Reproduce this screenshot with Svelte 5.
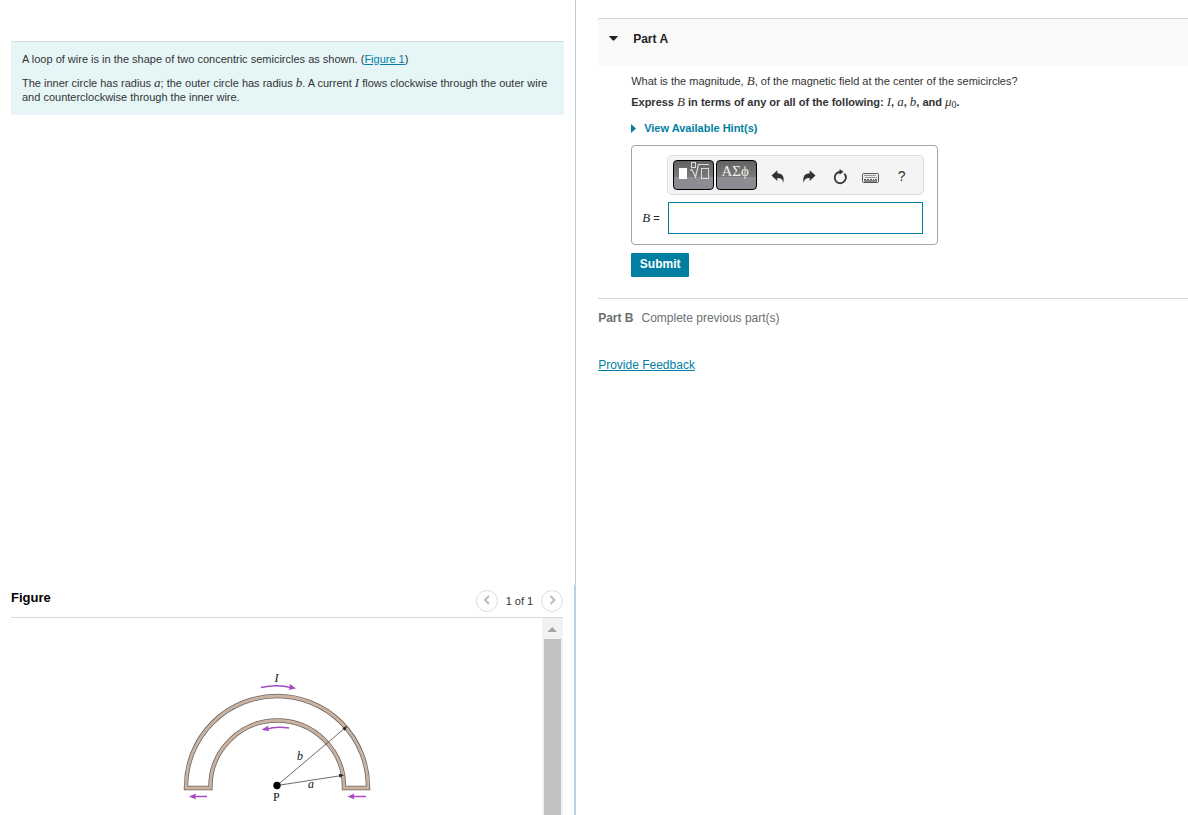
<script>
  let answer = $state('');
</script>

<div class="page">
  <section class="left">
    <div class="problem">
      <div class="intro">
        <p>A loop of wire is in the shape of two concentric semicircles as shown. (<a href="#figure">Figure 1</a>)</p>
        <p>The inner circle has radius <i>a</i>; the outer circle has radius <i>b</i>. A current <i>I</i> flows clockwise through the outer wire and counterclockwise through the inner wire.</p>
      </div>
    </div>

    <div class="figure-pane" id="figure">
      <header class="figure-head">
        <h2>Figure</h2>
        <nav class="pager" aria-label="Figures">
          <button aria-label="Previous figure"><svg width="20" height="20" viewBox="0 0 20 20"><path d="M12 5 8 9l4 4" /></svg></button>
          <span>1 of 1</span>
          <button aria-label="Next figure"><svg width="20" height="20" viewBox="0 0 20 20"><path d="M8.500 5l4 4-4 4" /></svg></button>
        </nav>
      </header>
      <div class="viewer">
        <div class="drawing">
          <svg width="201" height="149" viewBox="176 666 201 149" role="img" aria-label="Two concentric semicircular wires around point P">
            <defs>
              <path id="wire" d="M186 788V787A91 91 0 0 1 368 787V788H344V787A66.8 66.5 0 0 0 210.4 787V788Z" />
            </defs>
            <use href="#wire" fill="none" stroke="#6b6561" stroke-width="4.4" />
            <use href="#wire" fill="none" stroke="#cbb3a2" stroke-width="2.8" />
            <g stroke="#444" stroke-width="0.8">
              <path d="M277 785.5 345 728M277 785.5 342 775.5" />
            </g>
            <path d="M347 726l-2 5-2.600-3zM344 775l-4.500 2.700-.6-4z" fill="#222" />
            <circle cx="277" cy="785.500" r="3.700" fill="#000" />
            <g fill="none" stroke="#a64bc4" stroke-width="1.500">
              <path d="M261 687.500q16-3.500 30 0M289 728q-13-2-22 1M207 796.500h-13M366 796.500h-13" />
            </g>
            <g fill="#a64bc4">
              <path d="M296 688.500l-7.500 1.500 1.500-2.800-.3-3.400z" />
              <path d="M261.500 729.800l7-4.200-.6 3 1.600 2.600z" />
              <path d="M189 796.500l7-3-1 3 1 3z" />
              <path d="M347.500 796.500l7-3-1 3 1 3z" />
            </g>
            <g class="labels">
              <text x="274.500" y="682" font-style="italic">I</text>
              <text x="297" y="760" font-style="italic">b</text>
              <text x="308" y="788" font-style="italic">a</text>
              <text x="273" y="801">P</text>
            </g>
          </svg>
        </div>
        <div class="scrollbar" aria-hidden="true">
          <svg width="21" height="21" viewBox="0 0 21 21"><path d="M5.500 14h9.500L10.200 9z" fill="#a3a3a3" /></svg>
          <div class="thumb"></div>
        </div>
      </div>
    </div>
  </section>

  <main class="right">
    <header class="part-head">
      <svg width="9" height="5" viewBox="0 0 9 5"><path d="M0 0h9L5.500 4.200q-1 .8-2 0z" fill="#222" /></svg>
      <h2>Part A</h2>
    </header>

    <div class="part-body">
      <p>What is the magnitude, <i>B</i>, of the magnetic field at the center of the semicircles?</p>
      <p class="express">Express <i>B</i> in terms of any or all of the following: <i>I</i>, <i>a</i>, <i>b</i>, and <i>μ</i><sub>0</sub>.</p>
      <a class="hints" href="#hints"><svg width="5" height="9" viewBox="0 0 5 9"><path d="M0 0l5 4.500L0 9z" fill="#007fa3" /></svg>View Available Hint(s)</a>

      <div class="answer">
        <div class="toolbar">
          <button class="dark" aria-label="Templates">
            <svg width="30" height="20" viewBox="0 0 30 20">
              <rect x="0" y="7" width="8" height="11" fill="#fff" />
              <g fill="none" stroke="#dcdcdc">
                <rect x="12.500" y="1.500" width="4" height="5" />
                <path d="M11 9.500l2-1 3.500 7.500L19.500 3.500H30" stroke-width="1.200" />
                <rect x="22.500" y="7.500" width="7" height="10" />
              </g>
            </svg>
          </button>
          <button class="dark greek" aria-label="Greek symbols">ΑΣϕ</button>
          <div class="tools">
            <button class="tool" aria-label="Undo">
              <svg width="16" height="16" viewBox="0 0 16 16"><path d="M1.500 6.500 7.300 1.300v3c5.200.2 7.500 3.600 5.900 9.500-.5-3.500-2.300-4.800-5.900-4.700v3z" fill="#333" /></svg>
            </button>
            <button class="tool" aria-label="Redo">
              <svg width="16" height="16" viewBox="0 0 16 16"><path d="M14.500 6.500 8.700 1.300v3C3.500 4.500 1.200 7.900 2.800 13.800c.5-3.500 2.300-4.800 5.900-4.700v3z" fill="#333" /></svg>
            </button>
            <button class="tool" aria-label="Reset">
              <svg width="16" height="16" viewBox="0 0 16 16"><path d="M12.300 4.700A5.600 5.600 0 1 1 8.500 3" fill="none" stroke="#333" stroke-width="1.800" /><path d="M7.500 0l4 2.800-4 3z" fill="#333" /></svg>
            </button>
            <button class="tool" aria-label="Keyboard shortcuts">
              <svg width="17" height="16" viewBox="0 0 17 16"><rect x=".5" y="4.500" width="16" height="9" rx="1" fill="#eee" stroke="#555" /><path d="M2.500 6.500h12M3.500 8.500h11" stroke="#444" stroke-dasharray="1 1" /><path d="M2 10.500h2M13 10.500h2" stroke="#555" /><path d="M2 12h13" stroke="#888" stroke-width="2" /><path d="M5 10.500h7" stroke="#555" stroke-dasharray="2 1" /></svg>
            </button>
            <button class="tool help" aria-label="Help">?</button>
          </div>
        </div>
        <label for="answer"><i>B</i> =</label>
        <input id="answer" type="text" bind:value={answer} />
      </div>

      <button class="submit">Submit</button>
    </div>

    <div class="part-b"><b>Part B</b><span>Complete previous part(s)</span></div>
    <a class="feedback" href="#feedback">Provide Feedback</a>
  </main>
</div>

<style>
  :global(body) {
    margin: 0;
    background: #fff;
  }
  .page {
    display: flex;
    height: 100vh;
    overflow: hidden;
    font: 11px/14px "Liberation Sans", Arial, sans-serif;
    color: #333;
  }
  h2, p {
    margin: 0;
  }
  button {
    font-family: inherit;
    padding: 0;
    cursor: pointer;
  }
  a {
    color: #007fa3;
  }
  i, sub {
    font-family: "Liberation Serif", "Times New Roman", serif;
    font-size: 13px;
    font-weight: normal;
    line-height: 12px;
  }
  .left {
    flex: 0 0 48.5%;
    box-sizing: border-box;
    display: flex;
    flex-direction: column;
  }
  .problem {
    flex: 1;
    padding: 41px 11px 0;
    border-right: 1px solid #bcc6d2;
  }
  .intro {
    display: grid;
    gap: 10px;
    padding: 10px 11px 11px;
    border-top: 1px solid #d5dddd;
    background: #e6f6f7;
  }
  .figure-pane {
    flex: 0 0 230px;
    box-sizing: border-box;
    display: flex;
    flex-direction: column;
    padding: 0 11px;
    border-right: 2px solid #bcd0e2;
  }
  .figure-head {
    display: flex;
    justify-content: space-between;
    height: 32px;
    border-bottom: 1px solid #d8d8d8;
  }
  .figure-head h2 {
    font-size: 13px;
    line-height: 26px;
    color: #000;
  }
  .pager {
    display: flex;
    align-items: center;
    gap: 8px;
  }
  .pager button {
    width: 22px;
    height: 22px;
    border: 1px solid #ddd;
    border-radius: 50%;
    background: #fff;
  }
  .pager svg {
    display: block;
    fill: none;
    stroke: #bbb;
    stroke-width: 2;
  }
  .viewer {
    flex: 1;
    display: flex;
  }
  .drawing {
    flex: 1;
    display: flex;
    justify-content: center;
    align-items: flex-end;
  }
  .drawing svg {
    display: block;
  }
  .labels {
    font: 12px "Liberation Serif", serif;
    fill: #111;
  }
  .scrollbar {
    width: 21px;
    display: flex;
    flex-direction: column;
    background: #f1f1f1;
  }
  .thumb {
    flex: 1;
    margin: 0 2px;
    background: #c1c1c1;
  }
  .right {
    flex: 1;
    padding: 18px 0 0 22px;
  }
  .part-head {
    display: flex;
    align-items: center;
    gap: 15px;
    height: 39px;
    padding: 0 0 8px 11px;
    border-top: 1px solid #d8d8d8;
    background: #f9f9f9;
  }
  .part-head h2 {
    font-size: 12px;
    line-height: 14px;
    color: #222;
  }
  .part-body {
    padding: 8px 0 21px 33px;
    border-bottom: 1px solid #d8d8d8;
  }
  .express {
    margin-top: 7px;
    font-weight: bold;
  }
  sub {
    font-size: 10px;
    line-height: 8px;
    vertical-align: -2px;
  }
  .hints {
    display: flex;
    align-items: center;
    gap: 8px;
    width: max-content;
    margin: 12px 0 10px;
    font-weight: bold;
    text-decoration: none;
  }
  .answer {
    display: grid;
    grid-template-columns: 26px 255px;
    gap: 7px 0;
    align-items: center;
    justify-content: start;
    box-sizing: border-box;
    width: 307px;
    padding: 9px 10px 10px;
    border: 1px solid #a5a5a5;
    border-radius: 4px;
  }
  .toolbar {
    grid-column: 2;
    display: flex;
    align-items: center;
    box-sizing: border-box;
    width: 257px;
    height: 40px;
    padding: 0 5px;
    margin-left: -1px;
    border: 1px solid #ddd;
    border-radius: 5px;
    background: #f4f4f4;
  }
  .dark {
    flex: none;
    box-sizing: border-box;
    width: 41px;
    height: 30px;
    margin-right: 2px;
    border: 1px solid #000;
    border-radius: 4px;
    background: linear-gradient(#626262, #7a7a7a 56%, #8d8d92 56%, #8b8b91);
    color: #fff;
  }
  .dark svg {
    display: block;
    margin: 0 auto 8px;
  }
  .greek {
    padding: 0 3px 8px 0;
    font: 15px/20px "Liberation Serif", serif;
    color: #eee;
  }
  .tools {
    display: flex;
    margin-left: 3px;
  }
  .tool {
    flex: none;
    width: 31px;
    height: 24px;
    border: 0;
    background: none;
    color: #333;
  }
  .tool svg {
    display: block;
    margin: 3px auto 0;
  }
  .help {
    padding-top: 2px;
    font-size: 14px;
    line-height: 22px;
  }
  label {
    color: #222;
  }
  input {
    box-sizing: border-box;
    width: 100%;
    height: 32px;
    padding: 4px 8px;
    border: 1px solid #007fa3;
    background: #fff;
    font: 14px "Liberation Sans", sans-serif;
    outline: 0;
  }
  .submit {
    display: block;
    width: 58px;
    height: 24px;
    margin-top: 8px;
    padding-bottom: 2px;
    border: 0;
    border-radius: 1px;
    background: #007fa3;
    color: #fff;
    font-size: 12px;
    font-weight: bold;
  }
  .part-b {
    display: flex;
    gap: 8px;
    margin: 12px 0 33px;
    font-size: 12px;
    color: #6a7070;
  }
  .feedback {
    font-size: 12px;
  }
</style>
